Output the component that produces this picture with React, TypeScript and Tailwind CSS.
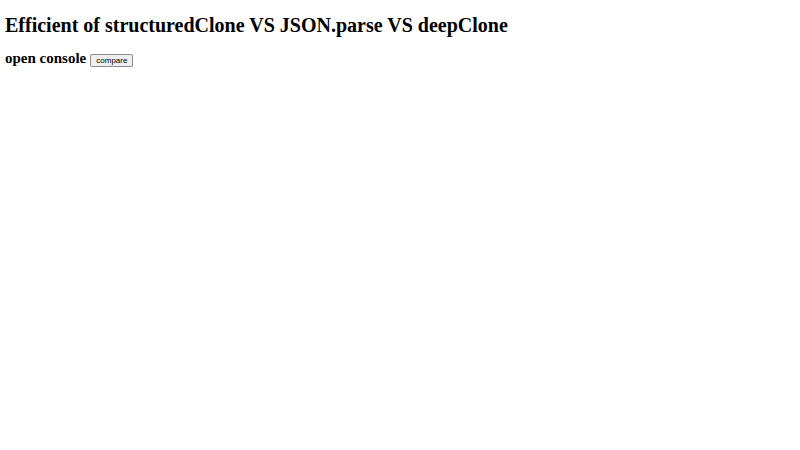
export default function App() {
  return (
    <main className="flex flex-col items-start gap-[11px] px-[5px] pt-[13px] font-['Liberation_Serif',serif] font-bold text-black">
      <h1 className="text-[20px] leading-[25px]">
        Efficient of structuredClone VS JSON.parse VS deepClone
      </h1>
      <div className="flex items-center gap-1">
        <h2 className="text-[15px] leading-[18px]">open console</h2>
        <button
          type="button"
          className="mt-1 rounded-xs border border-[#8c8c8c] bg-[#efefef] px-[5px] font-['Liberation_Sans',sans-serif] text-[8px] leading-[11px] font-normal text-black"
        >
          compare
        </button>
      </div>
    </main>
  );
}
